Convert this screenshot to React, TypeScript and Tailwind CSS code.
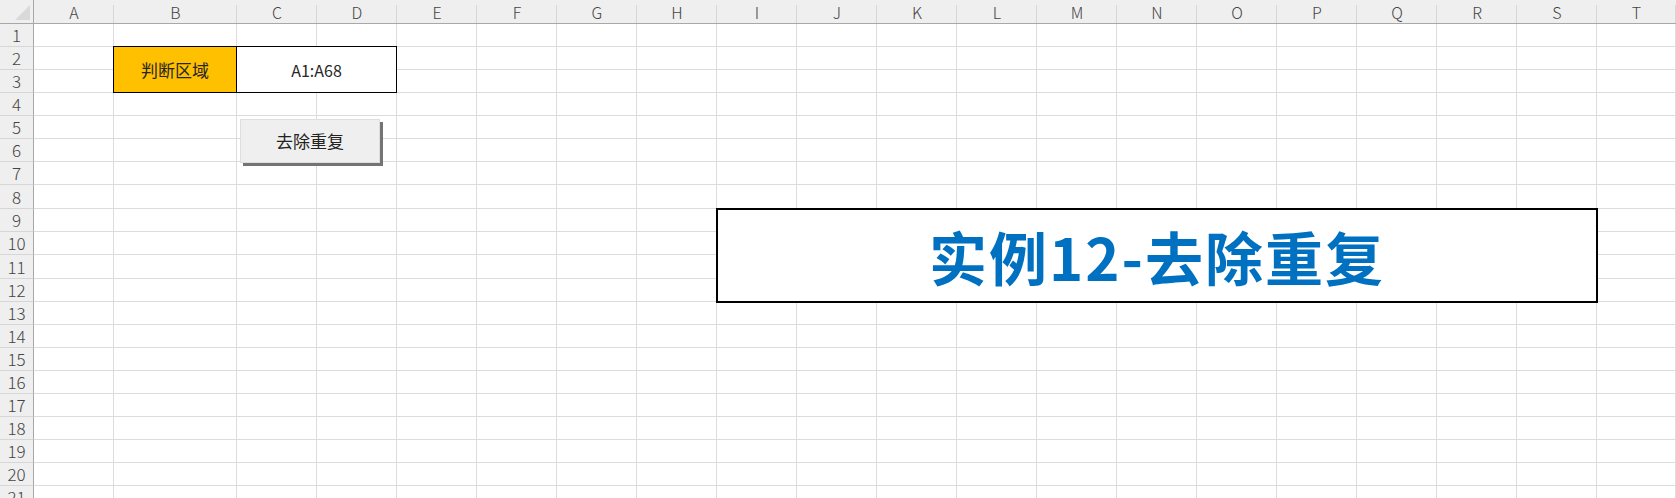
import React from "react";

const COLS = "ABCDEFGHIJKLMNOPQRST".split("");
const ROWS = Array.from({ length: 21 }, (_, i) => i + 1);

// cells hidden under merged ranges (col index 0 = A, row number)
function isMerged(c: number, r: number) {
  if (c === 1 && (r === 2 || r === 3)) return true; // B2:B3
  if ((c === 2 || c === 3) && (r === 2 || r === 3)) return true; // C2:D3
  if (c >= 8 && c <= 18 && r >= 9 && r <= 12) return true; // I9:S12
  return false;
}

const font = "font-['Noto_Sans_CJK_SC','Noto_Sans',sans-serif]";

function Corner() {
  return (
    <div className="bg-[#efefef] border-r border-b border-[#a8a8a8] flex items-end justify-end p-[3px]">
      <svg width="15" height="15" viewBox="0 0 15 15">
        <polygon points="15,0 15,15 0,15" fill="#d9d9d9" />
      </svg>
    </div>
  );
}

export default function App() {
  return (
    <div className={`relative w-[1676px] h-[498px] overflow-hidden bg-white ${font}`}>
      <div className="grid grid-cols-[34px_80px_123px_repeat(17,80px)_79px] grid-rows-[24px_repeat(7,23px)_24px_23px_23px_24px_repeat(10,23px)]">
        {/* merged ranges */}
        <div className="relative z-10 col-start-3 row-start-3 row-span-2 -ml-px -mt-px border border-black bg-[#ffc000] flex items-center justify-center text-[17px] text-[#262626]">
          判断区域
        </div>
        <div className="relative z-10 col-start-4 col-span-2 row-start-3 row-span-2 -ml-px -mt-px border border-black bg-white flex items-center justify-center text-[16px] text-[#262626]">
          A1:A68
        </div>
        <div className="relative z-10 col-start-10 col-span-11 row-start-10 row-span-4 -m-px border-2 border-black bg-white flex items-center justify-center">
          <span className="text-[58px] font-bold text-[#0070c0] tracking-[2px] leading-none">
            实例12-去除重复
          </span>
        </div>

        {/* column headers */}
        <Corner />
        {COLS.map((c) => (
          <div
            key={c}
            className="bg-[#efefef] border-b border-[#a8a8a8] relative flex items-center justify-center text-[16px] font-light text-[#444]"
          >
            <span className="absolute right-0 top-[5px] bottom-0 w-px bg-[#d6d6d6]" />
            {c}
          </div>
        ))}

        {/* body rows */}
        {ROWS.map((r) => (
          <React.Fragment key={r}>
            <div className="bg-[#efefef] border-r border-b border-r-[#a8a8a8] border-b-[#d6d6d6] flex items-center justify-center text-[17px] font-light text-[#444]">
              {r}
            </div>
            {COLS.map((c, ci) =>
              isMerged(ci, r) ? null : (
                <div key={c + r} className="border-r border-b border-[#dcdcdc]" />
              )
            )}
          </React.Fragment>
        ))}
      </div>

      {/* form button floating over the sheet */}
      <button className="absolute z-20 left-[240px] top-[119px] w-[140px] h-[44px] bg-[#efefef] border border-[#dedede] shadow-[3px_3px_0_0_#747474] flex items-center justify-center text-[17px] text-[#222]">
        去除重复
      </button>
    </div>
  );
}
